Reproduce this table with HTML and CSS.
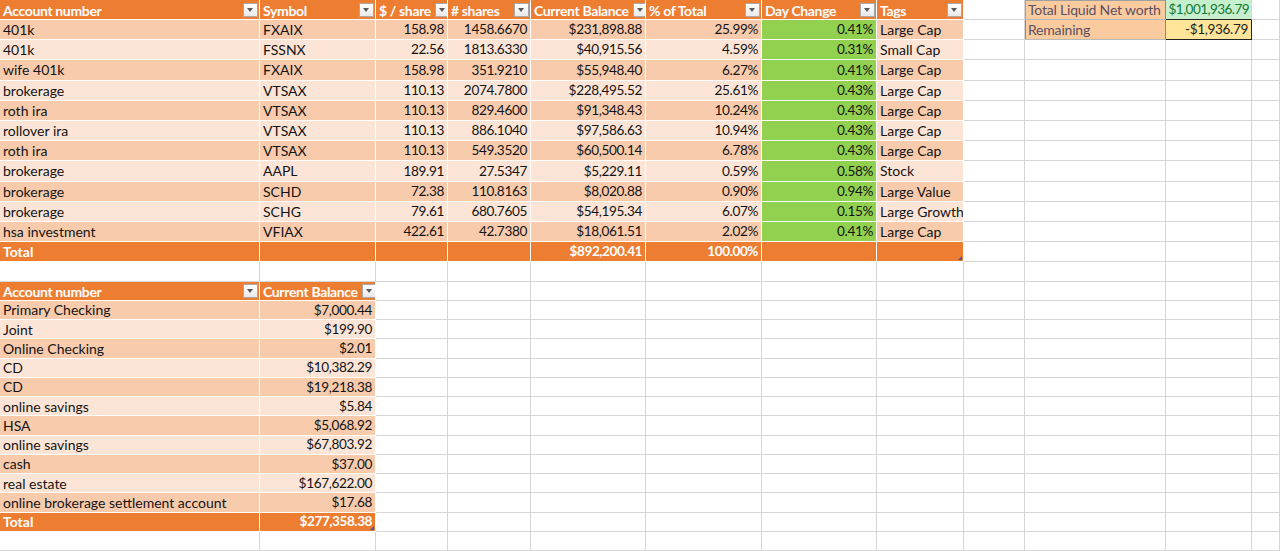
FILE: index.html
```html
<!DOCTYPE html>
<html>
<head>
<meta charset="utf-8">
<link rel="stylesheet" href="styles.css">
</head>
<body>
<div class="sheet">
  <div class="r r1">
    <div class="c t hd">Account number<span class="fb"></span></div>
    <div class="c t hd">Symbol<span class="fb"></span></div>
    <div class="c t hd">$ / share<span class="fb"></span></div>
    <div class="c t hd"># shares<span class="fb"></span></div>
    <div class="c t hd">Current Balance<span class="fb"></span></div>
    <div class="c t hd">% of Total<span class="fb"></span></div>
    <div class="c t hd">Day Change<span class="fb"></span></div>
    <div class="c t hd">Tags<span class="fb"></span></div>
    <i class="c"></i>
    <div class="c inp inp-top">Total Liquid Net worth</div>
    <div class="c good n">$1,001,936.79</div>
    <i class="c"></i>
  </div>
  <div class="r">
    <div class="c t d">401k</div><div class="c t d">FXAIX</div><div class="c t d n">158.98</div><div class="c t d n">1458.6670</div><div class="c t d n">$231,898.88</div><div class="c t d n">25.99%</div><div class="c t g n">0.41%</div><div class="c t d">Large Cap</div>
    <i class="c"></i>
    <div class="c inp">Remaining</div>
    <div class="c neutral n">-$1,936.79</div>
    <i class="c"></i>
  </div>
  <div class="r">
    <div class="c t l">401k</div><div class="c t l">FSSNX</div><div class="c t l n">22.56</div><div class="c t l n">1813.6330</div><div class="c t l n">$40,915.56</div><div class="c t l n">4.59%</div><div class="c t g n">0.31%</div><div class="c t l">Small Cap</div>
    <i class="c"></i><i class="c"></i><i class="c"></i><i class="c"></i>
  </div>
  <div class="r">
    <div class="c t d">wife 401k</div><div class="c t d">FXAIX</div><div class="c t d n">158.98</div><div class="c t d n">351.9210</div><div class="c t d n">$55,948.40</div><div class="c t d n">6.27%</div><div class="c t g n">0.41%</div><div class="c t d">Large Cap</div>
    <i class="c"></i><i class="c"></i><i class="c"></i><i class="c"></i>
  </div>
  <div class="r">
    <div class="c t l">brokerage</div><div class="c t l">VTSAX</div><div class="c t l n">110.13</div><div class="c t l n">2074.7800</div><div class="c t l n">$228,495.52</div><div class="c t l n">25.61%</div><div class="c t g n">0.43%</div><div class="c t l">Large Cap</div>
    <i class="c"></i><i class="c"></i><i class="c"></i><i class="c"></i>
  </div>
  <div class="r">
    <div class="c t d">roth ira</div><div class="c t d">VTSAX</div><div class="c t d n">110.13</div><div class="c t d n">829.4600</div><div class="c t d n">$91,348.43</div><div class="c t d n">10.24%</div><div class="c t g n">0.43%</div><div class="c t d">Large Cap</div>
    <i class="c"></i><i class="c"></i><i class="c"></i><i class="c"></i>
  </div>
  <div class="r">
    <div class="c t l">rollover ira</div><div class="c t l">VTSAX</div><div class="c t l n">110.13</div><div class="c t l n">886.1040</div><div class="c t l n">$97,586.63</div><div class="c t l n">10.94%</div><div class="c t g n">0.43%</div><div class="c t l">Large Cap</div>
    <i class="c"></i><i class="c"></i><i class="c"></i><i class="c"></i>
  </div>
  <div class="r">
    <div class="c t d">roth ira</div><div class="c t d">VTSAX</div><div class="c t d n">110.13</div><div class="c t d n">549.3520</div><div class="c t d n">$60,500.14</div><div class="c t d n">6.78%</div><div class="c t g n">0.43%</div><div class="c t d">Large Cap</div>
    <i class="c"></i><i class="c"></i><i class="c"></i><i class="c"></i>
  </div>
  <div class="r">
    <div class="c t l">brokerage</div><div class="c t l">AAPL</div><div class="c t l n">189.91</div><div class="c t l n">27.5347</div><div class="c t l n">$5,229.11</div><div class="c t l n">0.59%</div><div class="c t g n">0.58%</div><div class="c t l">Stock</div>
    <i class="c"></i><i class="c"></i><i class="c"></i><i class="c"></i>
  </div>
  <div class="r">
    <div class="c t d">brokerage</div><div class="c t d">SCHD</div><div class="c t d n">72.38</div><div class="c t d n">110.8163</div><div class="c t d n">$8,020.88</div><div class="c t d n">0.90%</div><div class="c t g n">0.94%</div><div class="c t d">Large Value</div>
    <i class="c"></i><i class="c"></i><i class="c"></i><i class="c"></i>
  </div>
  <div class="r">
    <div class="c t l">brokerage</div><div class="c t l">SCHG</div><div class="c t l n">79.61</div><div class="c t l n">680.7605</div><div class="c t l n">$54,195.34</div><div class="c t l n">6.07%</div><div class="c t g n">0.15%</div><div class="c t l">Large Growth</div>
    <i class="c"></i><i class="c"></i><i class="c"></i><i class="c"></i>
  </div>
  <div class="r">
    <div class="c t d">hsa investment</div><div class="c t d">VFIAX</div><div class="c t d n">422.61</div><div class="c t d n">42.7380</div><div class="c t d n">$18,061.51</div><div class="c t d n">2.02%</div><div class="c t g n">0.41%</div><div class="c t d">Large Cap</div>
    <i class="c"></i><i class="c"></i><i class="c"></i><i class="c"></i>
  </div>
  <div class="r">
    <div class="c t tot">Total</div><div class="c t tot"></div><div class="c t tot"></div><div class="c t tot"></div><div class="c t tot n">$892,200.41</div><div class="c t tot n">100.00%</div><div class="c t tot"></div><div class="c t tot handle"></div>
    <i class="c"></i><i class="c"></i><i class="c"></i><i class="c"></i>
  </div>

  <div class="r lo">
    <i class="c"></i><i class="c"></i><i class="c"></i><i class="c"></i><i class="c"></i><i class="c"></i><i class="c"></i><i class="c"></i><i class="c"></i><i class="c"></i><i class="c"></i><i class="c"></i>
  </div>
  <div class="r lo">
    <div class="c t hd">Account number<span class="fb"></span></div><div class="c t hd">Current Balance<span class="fb"></span></div>
    <i class="c"></i><i class="c"></i><i class="c"></i><i class="c"></i><i class="c"></i><i class="c"></i><i class="c"></i><i class="c"></i><i class="c"></i><i class="c"></i>
  </div>
  <div class="r lo">
    <div class="c t d">Primary Checking</div><div class="c t d n">$7,000.44</div>
    <i class="c"></i><i class="c"></i><i class="c"></i><i class="c"></i><i class="c"></i><i class="c"></i><i class="c"></i><i class="c"></i><i class="c"></i><i class="c"></i>
  </div>
  <div class="r lo">
    <div class="c t l">Joint</div><div class="c t l n">$199.90</div>
    <i class="c"></i><i class="c"></i><i class="c"></i><i class="c"></i><i class="c"></i><i class="c"></i><i class="c"></i><i class="c"></i><i class="c"></i><i class="c"></i>
  </div>
  <div class="r lo">
    <div class="c t d">Online Checking</div><div class="c t d n">$2.01</div>
    <i class="c"></i><i class="c"></i><i class="c"></i><i class="c"></i><i class="c"></i><i class="c"></i><i class="c"></i><i class="c"></i><i class="c"></i><i class="c"></i>
  </div>
  <div class="r lo">
    <div class="c t l">CD</div><div class="c t l n">$10,382.29</div>
    <i class="c"></i><i class="c"></i><i class="c"></i><i class="c"></i><i class="c"></i><i class="c"></i><i class="c"></i><i class="c"></i><i class="c"></i><i class="c"></i>
  </div>
  <div class="r lo">
    <div class="c t d">CD</div><div class="c t d n">$19,218.38</div>
    <i class="c"></i><i class="c"></i><i class="c"></i><i class="c"></i><i class="c"></i><i class="c"></i><i class="c"></i><i class="c"></i><i class="c"></i><i class="c"></i>
  </div>
  <div class="r lo">
    <div class="c t l">online savings</div><div class="c t l n">$5.84</div>
    <i class="c"></i><i class="c"></i><i class="c"></i><i class="c"></i><i class="c"></i><i class="c"></i><i class="c"></i><i class="c"></i><i class="c"></i><i class="c"></i>
  </div>
  <div class="r lo">
    <div class="c t d">HSA</div><div class="c t d n">$5,068.92</div>
    <i class="c"></i><i class="c"></i><i class="c"></i><i class="c"></i><i class="c"></i><i class="c"></i><i class="c"></i><i class="c"></i><i class="c"></i><i class="c"></i>
  </div>
  <div class="r lo">
    <div class="c t l">online savings</div><div class="c t l n">$67,803.92</div>
    <i class="c"></i><i class="c"></i><i class="c"></i><i class="c"></i><i class="c"></i><i class="c"></i><i class="c"></i><i class="c"></i><i class="c"></i><i class="c"></i>
  </div>
  <div class="r lo">
    <div class="c t d">cash</div><div class="c t d n">$37.00</div>
    <i class="c"></i><i class="c"></i><i class="c"></i><i class="c"></i><i class="c"></i><i class="c"></i><i class="c"></i><i class="c"></i><i class="c"></i><i class="c"></i>
  </div>
  <div class="r lo">
    <div class="c t l">real estate</div><div class="c t l n">$167,622.00</div>
    <i class="c"></i><i class="c"></i><i class="c"></i><i class="c"></i><i class="c"></i><i class="c"></i><i class="c"></i><i class="c"></i><i class="c"></i><i class="c"></i>
  </div>
  <div class="r lo">
    <div class="c t d">online brokerage settlement account</div><div class="c t d n">$17.68</div>
    <i class="c"></i><i class="c"></i><i class="c"></i><i class="c"></i><i class="c"></i><i class="c"></i><i class="c"></i><i class="c"></i><i class="c"></i><i class="c"></i>
  </div>
  <div class="r lo">
    <div class="c t tot">Total</div><div class="c t tot n handle">$277,358.38</div>
    <i class="c"></i><i class="c"></i><i class="c"></i><i class="c"></i><i class="c"></i><i class="c"></i><i class="c"></i><i class="c"></i><i class="c"></i><i class="c"></i>
  </div>
  <div class="r lo">
    <i class="c"></i><i class="c"></i><i class="c"></i><i class="c"></i><i class="c"></i><i class="c"></i><i class="c"></i><i class="c"></i><i class="c"></i><i class="c"></i><i class="c"></i><i class="c"></i>
  </div>
</div>
</body>
</html>
```

FILE: styles.css
```css
html, body {
  margin: 0;
  padding: 0;
  background: #ffffff;
}

body {
  width: 1280px;
  height: 551px;
  overflow: hidden;
  font-family: Lato, "Open Sans", "Liberation Sans", sans-serif;
  font-size: 14px;
  color: #141414;
}

.sheet {
  display: flex;
  flex-direction: column;
}

.r {
  display: grid;
  grid-template-columns: 260px 116px 72px 83px 115px 116px 115px 87px 61px 141px 86px 28px;
  height: 20.2px;
  flex: none;
}

.r1 {
  height: 20px;
}

.r.lo {
  height: 19.25px;
}

.c {
  box-sizing: border-box;
  border-right: 1px solid #d6d6d6;
  border-bottom: 1px solid #d6d6d6;
  display: flex;
  align-items: center;
  padding: 1px 2px 0 3px;
  white-space: nowrap;
  overflow: hidden;
  position: relative;
  font-style: normal;
  line-height: 1;
}

.c.n {
  justify-content: flex-end;
  font-size: 13.6px;
  letter-spacing: -0.35px;
  padding-right: 3px;
}

/* table cells */
.c.t {
  border-color: #ffffff;
}

.c.hd {
  background: #ed7d31;
  color: #ffffff;
  font-weight: 700;
  letter-spacing: -0.35px;
  justify-content: space-between;
  padding-right: 1px;
  padding-top: 2px;
}

.c.d {
  background: #f8cbad;
}

.c.l {
  background: #fce4d6;
}

.c.g {
  background: #92d050;
}

.c.tot {
  background: #ed7d31;
  color: #ffffff;
  font-weight: 700;
}

.c.tot.n {
  letter-spacing: -0.45px;
}

/* filter dropdown button */
.fb {
  flex: none;
  width: 15px;
  height: 14px;
  box-sizing: border-box;
  border: 1px solid #a9a9a9;
  background: linear-gradient(#ffffff, #e9e9e9);
  position: relative;
  margin-left: 4px;
  margin-top: -1px;
}

.fb::after {
  content: "";
  position: absolute;
  left: 3px;
  top: 4px;
  border-left: 3.5px solid transparent;
  border-right: 3.5px solid transparent;
  border-top: 4px solid #5a5a5a;
}

/* table resize handle */
.handle::after {
  content: "";
  position: absolute;
  right: 1px;
  bottom: 1px;
  border-left: 4px solid transparent;
  border-bottom: 4px solid #5450a0;
}

/* side summary cells */
.c.inp {
  background: #fbcba0;
  color: #5b5062;
  letter-spacing: -0.2px;
  border-right-color: #8a8a8a;
  border-bottom-color: #b9b9b9;
  box-shadow: inset 1px 0 0 #8a8a8a;
}

.c.inp-top {
  box-shadow: inset 1px 1px 0 #a0a0a0;
}

.c.good {
  background: #c6efce;
  color: #137a33;
  border-bottom-color: #222222;
  letter-spacing: -0.6px;
  padding-left: 1px;
  padding-right: 2px;
}

.c.neutral {
  background: #ffe59a;
  color: #1e1e1e;
  border-right-color: #222222;
  border-bottom-color: #222222;
}
```
